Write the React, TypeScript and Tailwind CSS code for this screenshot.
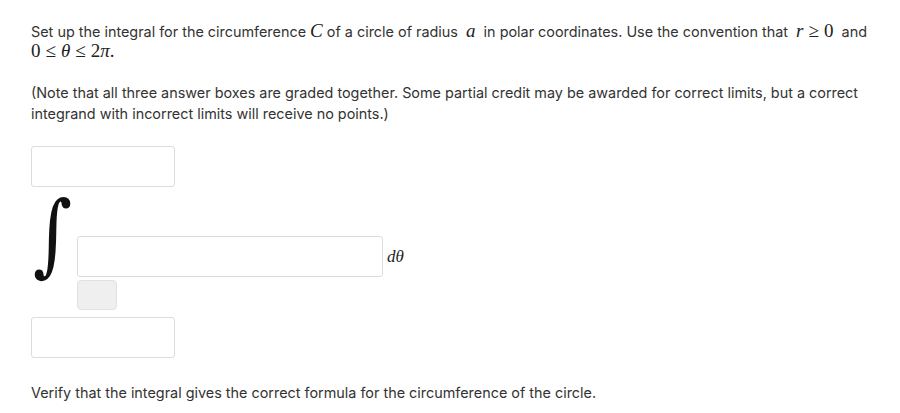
function M({ children }: { children: React.ReactNode }) {
  return <span className="whitespace-nowrap font-['Liberation_Serif',serif] text-[19px] leading-[14px] text-[#222]">{children}</span>
}

function I({ children }: { children: React.ReactNode }) {
  return <i className="font-['Liberation_Serif',serif]">{children}</i>
}

// relation symbol with KaTeX-ish thick spacing
function Rel({ children }: { children: React.ReactNode }) {
  return <span className="mx-[5px]">{children}</span>
}

function AnswerBox({ className }: { className: string }) {
  return <div className={"rounded-[3px] border border-[#dcdcdc] bg-white " + className} />
}

export default function App() {
  return (
    <div className="min-h-[413px] w-[900px] bg-white pl-[31px] pr-[20px] pt-[22px] font-['Inter',sans-serif] text-[14.4px] leading-[20px] text-[#333]">
      <p>
        Set up the integral for the circumference <M><I>C</I></M> of a circle of radius&nbsp; <M><I>a</I></M>&nbsp; in polar coordinates. Use the convention that&nbsp; <M><I>r</I><Rel>≥</Rel>0</M>&nbsp; and{" "}
        <M>0<Rel>≤</Rel><I>θ</I><Rel>≤</Rel>2<I>π</I>.</M>
      </p>
      <p className="mt-[20px] leading-[21px]">
        (Note that all three answer boxes are graded together. Some partial credit may be awarded for correct limits, but a correct integrand with incorrect limits will receive no points.)
      </p>

      <div className="mt-[22px] flex flex-col">
        <AnswerBox className="h-[41px] w-[144px]" />
        <div className="mt-[11px] flex">
          <div className="relative h-[90px] w-[46px]">
            <span className="absolute left-[2px] top-[-10px] block origin-top-left [transform:scale(1.25,1.5)] font-['DejaVu_Serif',serif] text-[60px] italic leading-[60px] text-[#111]">
              ∫
            </span>
          </div>
          <div className="mt-[38px] flex flex-col">
            <div className="flex items-center">
              <AnswerBox className="h-[41px] w-[306px]" />
              <span className="ml-[4px] font-['Liberation_Serif',serif] text-[17px] italic text-[#222]">dθ</span>
            </div>
            <div className="mt-[3px] h-[30px] w-[40px] rounded-[4px] border border-[#e2e2e2] bg-[#efefef]" />
          </div>
        </div>
        <AnswerBox className="mt-[7px] h-[41px] w-[144px]" />
      </div>

      <p className="mt-[25px]">Verify that the integral gives the correct formula for the circumference of the circle.</p>
    </div>
  )
}
